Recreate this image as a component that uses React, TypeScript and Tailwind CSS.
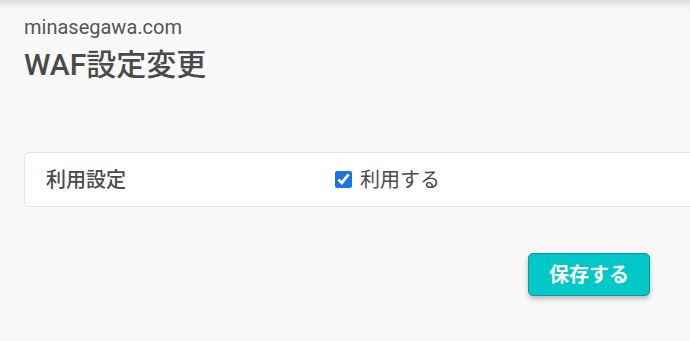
export default function App() {
  return (
    <div
      className="min-h-[341px] w-[690px] overflow-hidden bg-[#f9f9f9] text-[#4a4a4a] shadow-[inset_0_8px_8px_-6px_rgba(0,0,0,0.18)]"
      style={{ fontFamily: 'Roboto, "Noto Sans CJK JP", sans-serif' }}
    >
      <div className="pl-[24px] pt-[13px]">
        <p className="text-[20px] leading-[28px] text-[#555]">minasegawa.com</p>
        <h1 className="mt-[4px] text-[30px] font-medium leading-[40px] text-[#4a4a4a]">WAF設定変更</h1>

        <div className="mt-[67px] flex h-[55px] w-[720px] items-center rounded-[5px] border border-[#e3e3e3] bg-white">
          <div className="w-[310px] pl-[21px] text-[20px] font-medium text-[#4a4a4a]">利用設定</div>
          <label className="flex items-center gap-[8px] text-[20px] text-[#4a4a4a]">
            <input type="checkbox" defaultChecked className="h-[17px] w-[17px] accent-[#1a73e8]" />
            <span>利用する</span>
          </label>
        </div>

        <div className="mt-[46px] flex w-[626px] justify-end">
          <button className="h-[43px] w-[122px] rounded-[5px] border border-[#0a9a9a] bg-[#00c8c8] text-[20px] font-bold text-white shadow-[0_3px_5px_rgba(0,0,0,0.25)]">
            保存する
          </button>
        </div>
      </div>
    </div>
  )
}
